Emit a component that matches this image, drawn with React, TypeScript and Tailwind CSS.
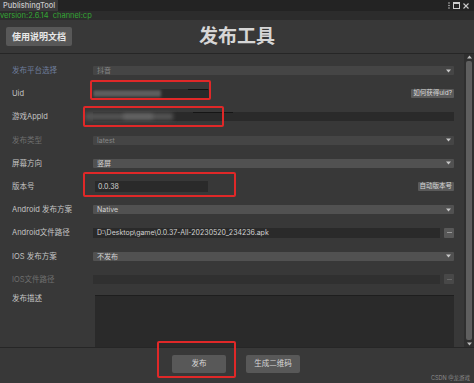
import React from "react";

function Arrow() {
  return (
    <svg width="5" height="4" viewBox="0 0 5 4" className="shrink-0">
      <path d="M0 0.5h5L2.5 3.5z" fill="#c8c8c8" />
    </svg>
  );
}

function Label({ children, tone = "normal" }: { children: React.ReactNode; tone?: "normal" | "dim" | "blue" }) {
  const color = tone === "dim" ? "text-[#6f6f6f]" : tone === "blue" ? "text-[#6e7d9c]" : "text-[#c4c4c4]";
  return <div className={`w-[93px] shrink-0 pl-[12px] text-[7.5px] leading-[15px] ${color}`}>{children}</div>;
}

function Dropdown({ value, disabled }: { value: string; disabled?: boolean }) {
  return (
    <div
      className={`flex-1 h-[9px] flex items-center justify-between pl-[4px] pr-[3px] rounded-[1px] text-[7px] ${
        disabled ? "bg-[#454545] text-[#858585]" : "bg-[#515151] text-[#d2d2d2]"
      }`}
    >
      <span className="leading-[9px]">{value}</span>
      <Arrow />
    </div>
  );
}

function Row({ children }: { children: React.ReactNode }) {
  return <div className="h-[23.2px] flex items-center pr-[4px]">{children}</div>;
}

function SmallBtn({ children }: { children: React.ReactNode }) {
  return (
    <div className="h-[9px] px-[2px] bg-[#5a5a5a] rounded-[1px] text-[6.5px] leading-[9px] text-[#d8d8d8] whitespace-nowrap">
      {children}
    </div>
  );
}

export default function App() {
  return (
    <div className="relative w-[474px] h-[383px] overflow-hidden bg-[#383838] flex flex-col font-[Inter,'Noto_Sans_CJK_SC',sans-serif]">
      {/* title bar */}
      <div className="h-[11px] bg-[#232323] flex items-stretch">
        <div className="w-[58px] bg-[#3a3a3a] pl-[3px] text-[7.5px] leading-[11px] font-medium text-[#c8c8c8]">PublishingTool</div>
        <div className="flex-1" />
        <div className="flex items-center gap-[3px] pr-[5px]">
          <svg width="2" height="7" viewBox="0 0 2 7">
            <circle cx="1" cy="1" r="0.8" fill="#bbb" />
            <circle cx="1" cy="3.5" r="0.8" fill="#bbb" />
            <circle cx="1" cy="6" r="0.8" fill="#bbb" />
          </svg>
          <svg width="7" height="7" viewBox="0 0 7 7">
            <rect x="0.5" y="0.5" width="6" height="6" fill="none" stroke="#ccc" strokeWidth="1" />
            <rect x="0.5" y="0.5" width="6" height="1.5" fill="#ccc" />
          </svg>
          <svg width="6" height="6" viewBox="0 0 6 6">
            <path d="M0.5 0.5l5 5M5.5 0.5l-5 5" stroke="#ccc" strokeWidth="1.1" />
          </svg>
        </div>
      </div>
      <div className="h-[9px] bg-[#2c2c2c] text-[7.5px] leading-[9px] text-[#34a634]">version:2.6.14&nbsp; channel:cp</div>

      {/* header */}
      <div className="h-[34px] flex items-center border-b border-[#262626] relative">
        <div className="ml-[6px] h-[19px] px-[6px] bg-[#585858] rounded-[2px] text-[9px] leading-[19px] font-bold text-[#e8e8e8]">
          使用说明文档
        </div>
        <div className="absolute left-0 right-0 top-[4px] text-center text-[19px] leading-[26px] font-bold text-[#d6d6d6] pointer-events-none">
          发布工具
        </div>
      </div>

      {/* body */}
      <div className="flex-1 flex min-h-0 border-b border-[#262626]">
        <div className="flex-1 flex flex-col pt-[5px]">
          <Row>
            <Label tone="blue">发布平台选择</Label>
            <Dropdown value="抖音" disabled />
          </Row>
          <Row>
            <Label>Uid</Label>
            <div className="w-[116px] h-[9px] bg-[#2a2a2a] relative overflow-hidden">
              <div className="absolute left-0 top-[1px] w-[68px] h-[7px] bg-[#5e5e5e] blur-[1.5px]" />
              <div className="absolute left-[95px] top-0 w-[20px] h-[1px] bg-[#111]" />
            </div>
            <div className="flex-1" />
            <SmallBtn>如何获得uid?</SmallBtn>
          </Row>
          <Row>
            <Label>游戏AppId</Label>
            <div className="flex-1 h-[9px] bg-[#2a2a2a] relative">
              <div className="absolute left-[-8px] top-[1px] w-[88px] h-[7px] bg-[#555] blur-[2px]" />
              <div className="absolute left-[30px] top-[2px] w-[30px] h-[5px] bg-[#666] blur-[2px]" />
              <div className="absolute left-[100px] top-0 w-[40px] h-[1px] bg-[#151515]" />
            </div>
          </Row>
          <Row>
            <Label tone="dim">发布类型</Label>
            <Dropdown value="latest" disabled />
          </Row>
          <Row>
            <Label>屏幕方向</Label>
            <Dropdown value="竖屏" />
          </Row>
          <Row>
            <Label>版本号</Label>
            <div className="ml-[2px] w-[113px] h-[11px] bg-[#2a2a2a] pl-[3px] text-[7px] leading-[11px] text-[#d2d2d2]">0.0.38</div>
            <div className="flex-1" />
            <SmallBtn>自动版本号</SmallBtn>
          </Row>
          <Row>
            <Label>Android 发布方案</Label>
            <Dropdown value="Native" />
          </Row>
          <Row>
            <Label>Android文件路径</Label>
            <div className="flex-1 h-[10px] bg-[#2a2a2a] pl-[4px] text-[7px] leading-[10px] text-[#d2d2d2] whitespace-nowrap overflow-hidden">
              D:\Desktop\game\0.0.37-All-20230520_234236.apk
            </div>
            <div className="ml-[4px] w-[10px] h-[10px] bg-[#585858] rounded-[1px] flex items-center justify-center">
              <div className="w-[5px] h-[1px] bg-[#9a9a9a]" />
            </div>
          </Row>
          <Row>
            <Label>IOS 发布方案</Label>
            <Dropdown value="不发布" />
          </Row>
          <Row>
            <Label tone="dim">IOS文件路径</Label>
            <div className="flex-1 h-[9px] bg-[#303030]" />
            <div className="ml-[4px] w-[10px] h-[10px] bg-[#484848] rounded-[1px] flex items-center justify-center">
              <div className="w-[5px] h-[1px] bg-[#666]" />
            </div>
          </Row>
          <div className="flex-1 flex items-start pr-[4px] min-h-0">
            <Label>发布描述</Label>
            <div className="ml-[2px] mt-[4px] flex-1 self-stretch bg-[#2a2a2a] border-t border-[#1e1e1e]" />
          </div>
        </div>

        {/* scrollbar */}
        <div className="w-[16px] flex">
          <div className="w-[6px]" />
          <div className="flex-1 bg-[#2f2f2f] flex flex-col items-center py-[1px]">
            <svg width="5" height="4" viewBox="0 0 5 4">
              <path d="M0 3.5h5L2.5 0.5z" fill="#bbb" />
            </svg>
            <div className="my-[2px] w-[6px] flex-1 bg-[#5f5f5f] rounded-[2px]" />
            <svg width="5" height="4" viewBox="0 0 5 4">
              <path d="M0 0.5h5L2.5 3.5z" fill="#bbb" />
            </svg>
          </div>
        </div>
      </div>

      {/* footer */}
      <div className="h-[35px] flex items-start justify-center gap-[20px] pt-[7px] pr-[2px] relative">
        <div className="w-[54px] h-[18px] bg-[#585858] rounded-[2px] text-center text-[7.5px] leading-[18px] text-[#d8d8d8]">发布</div>
        <div className="w-[54px] h-[18px] bg-[#585858] rounded-[2px] text-center text-[7.5px] leading-[18px] text-[#d8d8d8]">生成二维码</div>
        <div className="absolute right-[4px] bottom-[1px] text-[5.5px] leading-[7px] text-[#8a8a8a]">CSDN @龙游戏</div>
      </div>

      {/* red annotation boxes */}
      <div className="absolute left-[90px] top-[80px] w-[121px] h-[20px] border-2 border-[#e02828] rounded-[2px] pointer-events-none" />
      <div className="absolute left-[83px] top-[106px] w-[141px] h-[21px] border-2 border-[#e02828] rounded-[2px] pointer-events-none" />
      <div className="absolute left-[83px] top-[172px] w-[153px] h-[25px] border-2 border-[#e02828] rounded-[2px] pointer-events-none" />
      <div className="absolute left-[157px] top-[341px] w-[79px] h-[37px] border-2 border-[#e02828] rounded-[2px] pointer-events-none" />
    </div>
  );
}
